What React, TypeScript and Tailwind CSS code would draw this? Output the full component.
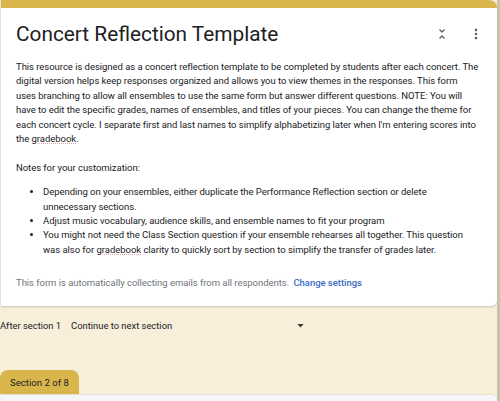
import { MoreVertical } from "lucide-react";

function CollapseIcon() {
  return (
    <svg width="10" height="14" viewBox="0 0 10 14" fill="none" aria-hidden="true">
      <path d="M2.5 2.5l2.5 2.5 2.5-2.5" stroke="#5f6368" strokeWidth="1.4" />
      <path d="M2.5 11.5l2.5-2.5 2.5 2.5" stroke="#5f6368" strokeWidth="1.4" />
    </svg>
  );
}

export default function App() {
  return (
    <div className="flex h-[401px] w-[500px] overflow-hidden bg-[#f7efda] font-['Roboto',sans-serif] text-[#202124]">
      <div className="flex min-w-0 flex-1 flex-col">
        <div className="ml-[1px] rounded-br-md rounded-tr-lg border-t-[8px] border-[#d9b64b] bg-white shadow-[0_1px_2px_rgba(60,64,67,0.25)]">
          <div className="flex items-start justify-between pl-[15px] pr-[14px] pt-[11px]">
            <h1 className="text-[20.8px] leading-[30px]">Concert Reflection Template</h1>
            <div className="flex items-center gap-[22px] pt-[8px]">
              <CollapseIcon />
              <MoreVertical size={14} strokeWidth={2.5} className="text-[#5f6368]" />
            </div>
          </div>
          <div className="pl-[15px] pr-[8px] pt-[11px] text-[9.5px] leading-[14.4px] tracking-[-0.04px]">
            <p>
              This resource is designed as a concert reflection template to be completed by students after each
              concert. The
              <br />
              digital version helps keep responses organized and allows you to view themes in the responses. This
              form
              <br />
              uses branching to allow all ensembles to use the same form but answer different questions. NOTE: You
              will
              <br />
              have to edit the specific grades, names of ensembles, and titles of your pieces. You can change the
              theme for
              <br />
              each concert cycle. I separate first and last names to simplify alphabetizing later when I'm entering
              scores into
              <br />
              the <span className="underline decoration-[#e8a0a0] decoration-dotted">gradebook</span>.
            </p>
            <p className="mt-[14.4px]">Notes for your customization:</p>
            <ul className="mt-[10px] list-disc pl-[27px]">
              <li>
                Depending on your ensembles, either duplicate the Performance Reflection section or delete
                <br />
                unnecessary sections.
              </li>
              <li>Adjust music vocabulary, audience skills, and ensemble names to fit your program</li>
              <li>
                You might not need the Class Section question if your ensemble rehearses all together. This question
                <br />
                was also for <span className="underline decoration-[#e8a0a0] decoration-dotted">gradebook</span>{" "}
                clarity to quickly sort by section to simplify the transfer of grades later.
              </li>
            </ul>
          </div>
          <div className="px-[15px] pb-[15px] pt-[19px] text-[9.5px] leading-[14.4px] tracking-[-0.04px] text-[#70757a]">
            This form is automatically collecting emails from all respondents.{" "}
            <span className="ml-[2px] font-medium text-[#3c6bc4]">Change settings</span>
          </div>
        </div>

        <div className="mt-[13px] flex items-center text-[9.4px] leading-[14px]">
          <span>After section 1</span>
          <span className="ml-[10px] w-[226px]">Continue to next section</span>
          <svg width="7" height="4" viewBox="0 0 8 5" aria-hidden="true">
            <path d="M0 0h8L4 4.5z" fill="#3c3c3c" />
          </svg>
        </div>

        <div className="mt-[37px] flex">
          <div className="rounded-t-lg bg-[#d9b64b] px-[10px] pb-[5px] pt-[6px] text-[9.6px] leading-[13px]">
            Section 2 of 8
          </div>
        </div>
        <div className="ml-[1px] flex-1 rounded-tr-md border-t border-[#e5e0d0] bg-[#f6f5f9]" />
      </div>
      <div className="w-[3px] bg-[#c9c3ad]" />
    </div>
  );
}
